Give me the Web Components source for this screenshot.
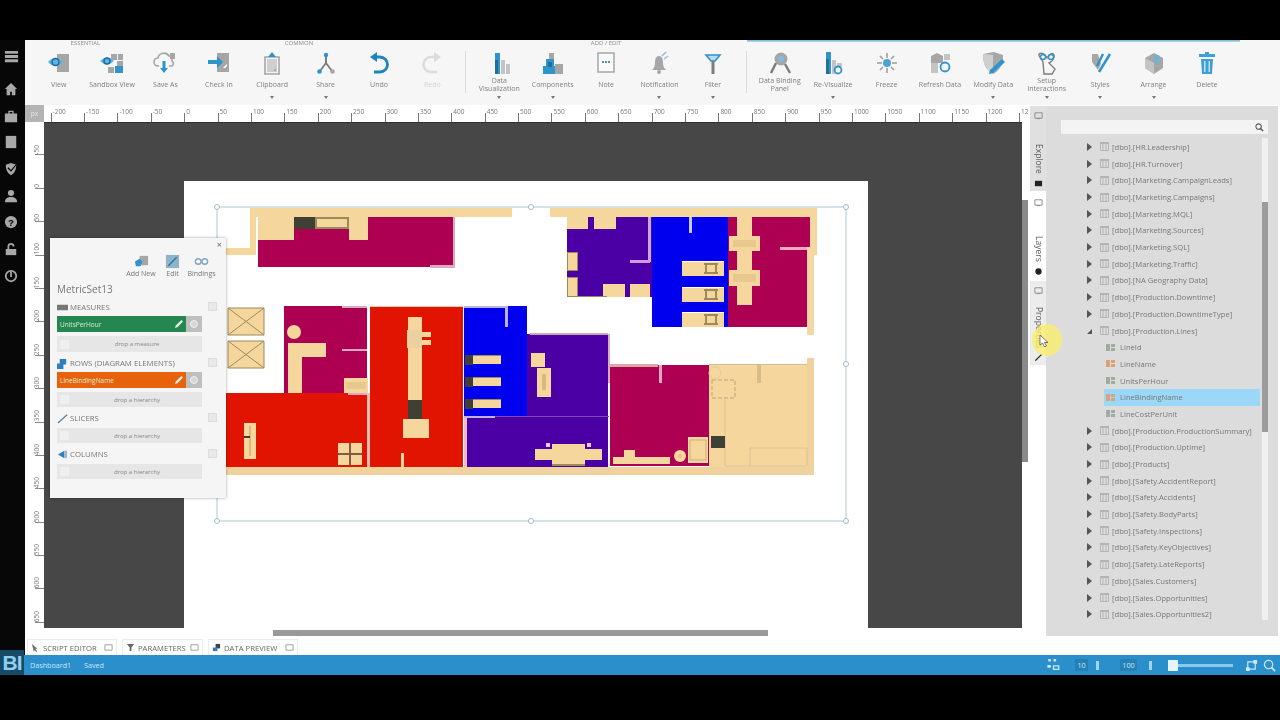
<!DOCTYPE html>
<html>

<head>
    <meta charset="utf-8">
    <title>Dashboard designer</title>
    <style>
        html, body { margin: 0; height: 720px; background: #000; overflow: hidden; }
        body { font-family: "Open Sans", "Liberation Sans", sans-serif; }
        bi-app { margin-top: 40px; }
    </style>
</head>

<body>
    <bi-app>
        <left-rail slot="rail"></left-rail>

        <tool-bar slot="toolbar">
            <tool-group title="ESSENTIAL">
                <tool-btn icon="view" label="View"></tool-btn>
                <tool-btn icon="sandbox" label="Sandbox View"></tool-btn>
            </tool-group>
            <tool-group title="COMMON">
                <tool-btn icon="saveas" label="Save As"></tool-btn>
                <tool-btn icon="checkin" label="Check In"></tool-btn>
                <tool-btn icon="clipboard" label="Clipboard" menu></tool-btn>
                <tool-btn icon="share" label="Share" menu></tool-btn>
                <tool-btn icon="undo" label="Undo"></tool-btn>
                <tool-btn icon="redo" label="Redo" off></tool-btn>
            </tool-group>
            <tool-sep></tool-sep>
            <tool-group title="ADD / EDIT">
                <tool-btn icon="dataviz" label="Data Visualization" menu></tool-btn>
                <tool-btn icon="components" label="Components" menu></tool-btn>
                <tool-btn icon="note" label="Note"></tool-btn>
                <tool-btn icon="notify" label="Notification" menu></tool-btn>
                <tool-btn icon="filter" label="Filter" menu></tool-btn>
            </tool-group>
            <tool-sep></tool-sep>
            <tool-group line>
                <tool-btn icon="binding" label="Data Binding Panel"></tool-btn>
                <tool-btn icon="revis" label="Re-Visualize" menu></tool-btn>
                <tool-btn icon="freeze" label="Freeze"></tool-btn>
                <tool-btn icon="refresh" label="Refresh Data"></tool-btn>
                <tool-btn icon="modify" label="Modify Data" menu></tool-btn>
                <tool-btn icon="interact" label="Setup Interactions" menu></tool-btn>
                <tool-btn icon="styles" label="Styles" menu></tool-btn>
                <tool-btn icon="arrange" label="Arrange" menu></tool-btn>
                <tool-btn icon="trash" label="Delete"></tool-btn>
            </tool-group>
        </tool-bar>

        <design-area slot="design">
            <floor-plan slot="page"></floor-plan>
            <metric-panel slot="over"></metric-panel>
        </design-area>

        <side-panel slot="side">
            <tree-row kind="table" label="[dbo].[HR.Leadership]"></tree-row>
            <tree-row kind="table" label="[dbo].[HR.Turnover]"></tree-row>
            <tree-row kind="table" label="[dbo].[Marketing.CampaignLeads]"></tree-row>
            <tree-row kind="table" label="[dbo].[Marketing.Campaigns]"></tree-row>
            <tree-row kind="table" label="[dbo].[Marketing.MQL]"></tree-row>
            <tree-row kind="table" label="[dbo].[Marketing.Sources]"></tree-row>
            <tree-row kind="table" label="[dbo].[Marketing.SQL]"></tree-row>
            <tree-row kind="table" label="[dbo].[Marketing.Traffic]"></tree-row>
            <tree-row kind="table" label="[dbo].[NA Geography Data]"></tree-row>
            <tree-row kind="table" label="[dbo].[Production.Downtime]"></tree-row>
            <tree-row kind="table" label="[dbo].[Production.DowntimeType]"></tree-row>
            <tree-row kind="table" open label="[dbo].[Production.Lines]"></tree-row>
            <tree-row kind="col" label="LineId"></tree-row>
            <tree-row kind="col" orange label="LineName"></tree-row>
            <tree-row kind="col" label="UnitsPerHour"></tree-row>
            <tree-row kind="col" orange selected label="LineBindingName"></tree-row>
            <tree-row kind="col" label="LineCostPerUnit"></tree-row>
            <tree-row kind="table" label="[dbo].[Production.ProductionSummary]"></tree-row>
            <tree-row kind="table" label="[dbo].[Production.Uptime]"></tree-row>
            <tree-row kind="table" label="[dbo].[Products]"></tree-row>
            <tree-row kind="table" label="[dbo].[Safety.AccidentReport]"></tree-row>
            <tree-row kind="table" label="[dbo].[Safety.Accidents]"></tree-row>
            <tree-row kind="table" label="[dbo].[Safety.BodyParts]"></tree-row>
            <tree-row kind="table" label="[dbo].[Safety.Inspections]"></tree-row>
            <tree-row kind="table" label="[dbo].[Safety.KeyObjectives]"></tree-row>
            <tree-row kind="table" label="[dbo].[Safety.LateReports]"></tree-row>
            <tree-row kind="table" label="[dbo].[Sales.Customers]"></tree-row>
            <tree-row kind="table" label="[dbo].[Sales.Opportunities]"></tree-row>
            <tree-row kind="table" label="[dbo].[Sales.Opportunities2]"></tree-row>
        </side-panel>

        <bottom-tabs slot="tabs"></bottom-tabs>
        <status-bar slot="status"></status-bar>
    </bi-app>

    <script type="text/javascript">
        const B = '#2f93cc', G = '#a6a6a6', D = '#7d7d7d';

        // --- toolbar icons, 24x24 ---
        const ICONS = {
            view: `<path fill="${G}" d="M10 3h12v18H10z"/><path fill="#5db4e4" d="M1 11Q8 3 16 11Q8 19 1 11z"/><circle cx="8.500" cy="11" r="3.500" fill="none" stroke="#1c6f9f" stroke-width="1.500"/>`,
            sandbox: `<path fill="${G}" d="M11 3h6v6h-6zM18 3h5v6h-5zM17 10h6v5h-6z"/><path fill="#5db4e4" d="M0 10Q7 3 14 10Q7 17 0 10z"/><circle cx="7" cy="10" r="3" fill="none" stroke="#1c6f9f" stroke-width="1.500"/><path fill="${B}" d="M15 15h8v7h-8z"/><path fill="${G}" d="M8 16h6v6H8z"/>`,
            saveas: `<path fill="none" stroke="${G}" stroke-width="1.600" d="M6 15H5a4 4 0 0 1 0-8 6 6 0 0 1 11-2h3v5a3 3 0 0 1 0 5h-3"/><path fill="${G}" d="M17 2h5v6h-5z"/><path fill="${B}" d="M9.500 10h3v7h2.500l-4 5-4-5h2.500z"/>`,
            checkin: `<path fill="${G}" d="M10 2h12v19H10z"/><path fill="#fff" d="M16 17l4-4v2l-2 2z"/><path fill="${B}" d="M1 9h9V5l6 6-6 6v-4H1z"/>`,
            clipboard: `<path fill="none" stroke="${G}" stroke-width="1.600" d="M5 6h14v17H5z"/><path fill="${B}" d="M8 6l4-5 4 5z"/><path fill="#cfcfcf" d="M7 8h10v13H7z"/><path fill="${G}" d="M13 20l3-3v3z"/>`,
            share: `<circle cx="12" cy="4" r="2.200" fill="${B}"/><path fill="${D}" d="M11 6h2v7h-2z"/><path fill="none" stroke="${D}" stroke-width="1.800" d="M12 12L6 20M12 12l6 8"/><circle cx="5.500" cy="20.500" r="2.300" fill="${B}"/><circle cx="18.500" cy="20.500" r="2.300" fill="${G}"/>`,
            undo: `<path fill="none" stroke="#1f83bd" stroke-width="2.800" d="M9 6h4a7 7 0 0 1 0 15H7"/><path fill="#1f83bd" d="M10 1v10L3 6z"/>`,
            redo: `<path fill="none" stroke="#dcdcdc" stroke-width="2.500" d="M16 6h-5a7 7 0 0 0 0 15h6"/><path fill="#dcdcdc" d="M14 1v10l7-5z"/>`,
            dataviz: `<path fill="#c4c4c4" d="M14 9h4v14h-4zM19 13h4v10h-4z"/><path fill="${B}" d="M8 2h5v21H8z"/><path fill="#1f6f9d" d="M8 9h3v14H8z"/>`,
            components: `<path fill="${G}" d="M8 2h5v6H8zM14 13h8v10h-8z"/><path fill="${B}" d="M5 8h8v9H5zM2 15h12v8H2z"/><path fill="#1f6f9d" d="M7 11h4v5H7z"/>`,
            note: `<path fill="#fafafa" stroke="${G}" stroke-width="1.500" d="M4 2h16v19H4z"/><path stroke="#5f8fac" stroke-width="2" stroke-dasharray="2 1" d="M8 11h8"/>`,
            notify: `<path fill="${G}" d="M12 5c-3 0-4 3-4 7 0 3-1 5-3 7h14c-2-2-3-4-3-7 0-4-1-7-4-7z"/><circle cx="12" cy="21" r="2" fill="${G}"/><path fill="none" stroke="#8fc1de" stroke-width="1.500" d="M15 5l4-4M17 8l4-3"/>`,
            filter: `<path fill="#bcd9ea" stroke="${B}" stroke-width="1.600" d="M5 4h14l-5 6h-4z"/><path fill="${D}" d="M10.500 10h3v13h-3z"/>`,
            binding: `<circle cx="13" cy="8" r="6.500" fill="${G}"/><circle cx="13" cy="8" r="3" fill="#7fbbdf"/><path fill="none" stroke="${D}" stroke-width="2.500" d="M8 12l-5 10M17 13l5 9"/>`,
            revis: `<path fill="${B}" d="M5 1h5v22H5z"/><path fill="#1f6f9d" d="M5 8h3v15H5z"/><path fill="#c4c4c4" d="M11 9h4v14h-4zM16 12h5v4h-5z"/><circle cx="17" cy="19" r="3.500" fill="none" stroke="${B}" stroke-width="1.800"/>`,
            freeze: `<circle cx="12" cy="12" r="4" fill="#4aa3d6"/><g stroke="#9a9a9a" stroke-width="1.500"><path d="M12 2v5M12 17v5M2 12h5M17 12h5M5 5l3 3M16 16l3 3M19 5l-3 3M8 16l-3 3"/></g>`,
            refresh: `<path fill="${G}" d="M3 5l6-3 6 3v7H3z"/><path fill="#c4c4c4" d="M3 12h7v10H3zM16 3h6v6h-6z"/><circle cx="17" cy="16" r="4.500" fill="none" stroke="${B}" stroke-width="1.800"/>`,
            modify: `<path fill="${G}" d="M2 3l11-2 9 3c0 10-3 15-10 19C5 19 2 13 2 3z"/><path fill="#cfcfcf" d="M2 3l10 1v19C5 19 2 13 2 3z"/><path fill="${B}" d="M21 8l3 3-12 11-4 1 1-4z"/>`,
            interact: `<path fill="none" stroke="${D}" stroke-width="1.400" d="M8 11c-2-4-5-6-4-8 2-2 6 0 8 4 2-4 6-6 7-3 1 4-3 7-5 8l6 6-3 5H9z"/><circle cx="8" cy="6" r="2.500" fill="none" stroke="${B}" stroke-width="1.400"/><circle cx="16" cy="6" r="2.500" fill="none" stroke="${B}" stroke-width="1.400"/>`,
            styles: `<path fill="${G}" d="M4 3h6l3 10-3 6-6-8z"/><path fill="none" stroke="${B}" stroke-width="2.500" d="M22 3L11 21M15 3l-6 12"/>`,
            arrange: `<path fill="${G}" d="M12 2l9 5v10l-9 6-9-6V7z"/><path fill="#c4c4c4" d="M3 7l9 5v11l-9-6z"/><path fill="#6fb1d8" d="M13 3l5 2-2 7-4 1z"/>`,
            trash: `<path fill="#3fa0d6" d="M10 1h4v2h6v3H4V3h6z"/><path fill="#3fa0d6" d="M6 8h12l-1 15H7z"/><path fill="#bfe0f2" d="M9 10h1.500v11H9zM13.500 10H15v11h-1.500z"/>`
        };

        // --- left rail icons, 16x16 ---
        const RAIL = [
            `<path d="M1 2h14v3H1zM1 6.500h14v3H1zM1 11h14v3H1z"/>`,
            `<path d="M8 1l7 7h-2v7H9v-4H7v4H3V8H1z"/>`,
            `<path d="M5 2h6v3h4v10H1V5h4zM6.500 3.500V5h3V3.500z"/>`,
            `<path d="M2 1h12v14H2z"/>`,
            `<path d="M2 3l6-2 6 2c0 6-2 10-6 12C4 13 2 9 2 3z"/><path fill="#000" d="M4 7l1-1 3 3 5-6 1 1-6 7z"/>`,
            `<circle cx="8" cy="4.500" r="3.500"/><path d="M1 15c0-4 3-6 7-6s7 2 7 6z"/>`,
            `<circle cx="8" cy="8" r="7"/><text x="8" y="12" font-size="11" font-weight="700" text-anchor="middle" fill="#000" font-family="Liberation Sans">?</text>`,
            `<path d="M2 8h12v7H2z"/><path fill="none" stroke="currentColor" stroke-width="2" d="M5 8V5a3 3 0 0 1 6 0"/>`,
            `<circle cx="8" cy="8" r="6" fill="none" stroke="currentColor" stroke-width="2"/><path d="M7 3h2v6H7z"/>`
        ];

        class BiApp extends HTMLElement {
            constructor() {
                super();
                this.attachShadow({ mode: 'open' }).innerHTML = `
                <style>
                    :host { display: grid; width: 1280px; height: 635px; grid-template-columns: 25px 1fr;
                        grid-template-rows: 65px 531px 19px 20px; background: #fff; filter: blur(.5px); }
                    ::slotted([slot=rail]) { grid-row: 1 / 4; }
                    ::slotted([slot=toolbar]) { grid-column: 2; }
                    .mid { grid-column: 2; display: flex; min-height: 0; }
                    ::slotted([slot=tabs]) { grid-column: 2; }
                    ::slotted([slot=status]) { grid-column: 1 / 3; }
                </style>
                <slot name="rail"></slot>
                <slot name="toolbar"></slot>
                <div class="mid"><slot name="design"></slot><slot name="side"></slot></div>
                <slot name="tabs"></slot>
                <slot name="status"></slot>`;
            }
        }

        class LeftRail extends HTMLElement {
            constructor() {
                super();
                const items = RAIL.map((p, i) => `<svg class="${i ? '' : 'first'}" viewBox="0 0 16 16">${p}</svg>`).join('');
                this.attachShadow({ mode: 'open' }).innerHTML = `
                <style>
                    :host { display: flex; flex-direction: column; align-items: center; background: #070707;
                        padding: 9px 3px 0 0; color: #a8a8a8; box-sizing: border-box; }
                    svg { width: 14px; height: 14px; fill: currentColor; margin-bottom: 12.700px; }
                    svg.first { width: 15px; height: 15px; margin-bottom: 18px; }
                </style>${items}`;
            }
        }

        class ToolBar extends HTMLElement {
            constructor() {
                super();
                this.attachShadow({ mode: 'open' }).innerHTML = `
                <style>
                    :host { display: flex; background: #f6f6f6; padding-left: 7px; }
                </style><slot></slot>`;
            }
        }

        class ToolGroup extends HTMLElement {
            constructor() {
                super();
                const title = this.getAttribute('title') || '';
                this.removeAttribute('title');
                this.attachShadow({ mode: 'open' }).innerHTML = `
                <style>
                    :host { display: flex; flex-direction: column; align-items: stretch; }
                    .head { height: 10px; font-size: 6px; line-height: 7px; color: #8d8d8d; text-align: center; }
                    .line { margin: 0 -6px; height: 1px; background: #a9d6e6; border-top: 1px solid #7fc0d8; }
                    .btns { display: flex; }
                </style>
                <div class="head">${this.hasAttribute('line') ? '<div class="line"></div>' : title}</div>
                <div class="btns"><slot></slot></div>`;
            }
        }

        class ToolSep extends HTMLElement {
            constructor() {
                super();
                this.attachShadow({ mode: 'open' }).innerHTML = `
                <style>
                    :host { display: block; width: 13.500px; position: relative; }
                    div { width: 1px; margin: 11px auto 0; height: 42px; background: #dcdcdc; }
                </style><div></div>`;
            }
        }

        class ToolBtn extends HTMLElement {
            constructor() {
                super();
                const label = this.getAttribute('label');
                const menu = this.hasAttribute('menu');
                this.attachShadow({ mode: 'open' }).innerHTML = `
                <style>
                    :host { display: flex; flex-direction: column; align-items: center; width: 53.400px; padding-top: 1px; }
                    svg { width: 24px; height: 24px; display: block; }
                    .lab { height: 16px; margin-top: 2px; display: flex; align-items: center; text-align: center;
                        font-size: 7px; line-height: 8px; color: ${this.hasAttribute('off') ? '#d4d4d4' : '#7f7f7f'}; width: 50px; justify-content: center; }
                    .arrow { margin-top: 3px; width: 0; height: 0; border: 2.500px solid transparent; border-top: 3px solid #777; border-bottom: 0; }
                </style>
                <svg viewBox="0 0 24 24">${ICONS[this.getAttribute('icon')]}</svg>
                <div class="lab">${label}</div>
                ${menu ? '<div class="arrow"></div>' : ''}`;
            }
        }

        class HRuler extends HTMLElement {
            constructor() {
                super();
                let html = '';
                for (let v = -200; v <= 1200; v += 50) html += `<div class="t"><span>${v}</span></div>`;
                // the reference shows the last value running into the side panel
                html += `<div class="t"><span>12</span></div>`;
                this.attachShadow({ mode: 'open' }).innerHTML = `
                <style>
                    :host { display: flex; overflow: hidden; background: #fff; padding-left: 6.600px; box-sizing: border-box; }
                    .t { flex: 0 0 33.400px; box-sizing: border-box; height: 17px; position: relative; }
                    .t:last-child { flex-basis: 12px; }
                    .t::before { content: ""; display: block; width: 1px; height: 9px; background: #777; margin-top: 8px; }
                    span { position: absolute; left: 2px; top: 3px; font-size: 6.500px; line-height: 8px; color: #777; }
                </style>${html}`;
            }
        }

        class VRuler extends HTMLElement {
            constructor() {
                super();
                let html = '';
                for (let v = -50; v <= 650; v += 50) html += `<div class="t"><span>${v}</span></div>`;
                this.attachShadow({ mode: 'open' }).innerHTML = `
                <style>
                    :host { display: block; overflow: hidden; background: #fff; }
                    .t { height: 33.400px; position: relative; box-sizing: border-box; }
                    .t:first-child { margin-top: -7.800px; }
                    .t::after { content: ""; position: absolute; right: 0; bottom: 0; width: 9px; height: 1px; background: #888; }
                    span { position: absolute; left: 8px; bottom: 1px; writing-mode: vertical-rl; transform: rotate(180deg);
                        font-size: 6.500px; line-height: 7px; color: #777; }
                </style>${html}`;
            }
        }

        class DesignArea extends HTMLElement {
            constructor() {
                super();
                this.attachShadow({ mode: 'open' }).innerHTML = `
                <style>
                    :host { display: grid; grid-template-columns: 19px 978px 8px; grid-template-rows: 17px 506px 8px; width: 1005px; background: #fff; }
                    .corner { background: #b4b4b4; color: #e8e8e8; font-size: 6.500px; text-align: center; line-height: 17px; }
                    h-ruler { grid-column: 2 / 4; }
                    v-ruler { grid-row: 2 / 4; }
                    .canvas { background: #474747; padding: 58px 0 0 140px; position: relative; border-top: 1px solid #333; box-sizing: border-box; }
                    ::slotted([slot=over]) { position: absolute; left: 6px; top: 115px; }
                    .vs { background: #fff; padding-top: 78px; }
                    .vs div { height: 262px; background: #8a8a8a; margin-left: 0; width: 6px; }
                    .hs { background: #fff; padding: 2px 0 0 229px; box-sizing: border-box; }
                    .hs div { width: 495px; height: 6px; background: #9a9a9a; }
                </style>
                <div class="corner">px</div>
                <h-ruler></h-ruler>
                <v-ruler></v-ruler>
                <div class="canvas"><slot name="page"></slot><slot name="over"></slot></div>
                <div class="vs"><div></div></div>
                <div class="hs"><div></div></div>`;
            }
        }

        // plan of the site, in the coordinates of the window so it can be read against the picture
        class FloorPlan extends HTMLElement {
            constructor() {
                super();
                const tan = '#f5d79e', mag = '#ae0052', red = '#e01400', blu = '#0000ee', pur = '#4b00a5', pnk = '#dcaac0', olv = '#9c8a5c', drk = '#3f3f34';
                const r = (x, y, w, h, f) => `<rect x="${x}" y="${y}" width="${w}" height="${h}" fill="${f}"/>`;
                const crate = (x, y) => r(x, y, 36, 27, tan) + `<path fill="none" stroke="${olv}" d="M${x} ${y}h36v27h-36zL${x + 36} ${y + 27}M${x + 36} ${y}L${x} ${y + 27}"/>`;
                const bench = y => r(682, y, 42, 15, tan) + r(682, y, 42, 1, '#fff') + `<path fill="none" stroke="${olv}" stroke-width="2" d="M704 ${y + 3}h14M704 ${y + 12}h14M706 ${y + 3}v9M716 ${y + 3}v9"/>`;
                const seat = y => r(465, y - 1, 8, 10, drk) + r(473, y, 28, 8, tan) + r(473, y - 1, 28, 1, olv);
                this.attachShadow({ mode: 'open' }).innerHTML = `
                <style>
                    :host { display: block; width: 684px; height: 447px; background: #fff; }
                    svg { display: block; }
                </style>
                <svg width="684" height="447" viewBox="184 181 684 447">
                    ${r(250, 208, 262, 9, tan)}${r(250, 208, 6, 47, tan)}${r(226, 248, 30, 7, tan)}
                    ${r(258, 217, 195, 50, mag)}${r(258, 217, 36, 23, tan)}${r(294, 217, 21, 12, drk)}${r(315, 217, 34, 12, olv)}${r(317, 219, 30, 8, tan)}
                    ${r(349, 217, 19, 23, tan)}${r(453, 217, 2, 51, pnk)}${r(430, 265, 25, 3, pnk)}

                    ${r(284, 306, 83, 87, mag)}${r(342, 306, 25, 2, pnk)}${r(342, 349, 25, 2, pnk)}
                    <circle cx="294" cy="332" r="7" fill="${tan}"/>
                    ${r(288, 343, 38, 14, tan)}${r(288, 343, 14, 50, tan)}${r(344, 378, 24, 15, tan)}${r(346, 382, 20, 7, '#e8c88e')}
                    ${crate(228, 308)}${crate(228, 341)}

                    ${r(226, 393, 141, 74, red)}${r(348, 393, 19, 2, pnk)}
                    ${r(244, 423, 12, 36, tan)}${r(249, 426, 2, 30, '#d9b97e')}${r(244, 436, 6, 2, drk)}
                    ${r(338, 443, 24, 22, tan)}${r(349, 443, 2, 22, '#8a5a40')}${r(338, 453, 24, 2, '#8a5a40')}
                    ${r(370, 306, 93, 161, red)}${r(370, 306, 93, 1, '#eec9b0')}
                    ${r(408, 317, 14, 83, tan)}${r(407, 330, 15, 18, '#ecd0a0')}${r(422, 332, 9, 5, tan)}${r(422, 340, 9, 5, tan)}
                    ${r(408, 400, 14, 20, drk)}${r(403, 419, 26, 19, tan)}${r(401, 453, 3, 14, tan)}
                    ${r(367, 393, 3, 74, '#f3c0b0')}

                    ${r(464, 306, 63, 110, blu)}${r(464, 306, 41, 2, '#b9b4e8')}${r(505, 306, 3, 21, '#b9b4e8')}
                    ${seat(356)}${seat(378)}${seat(400)}
                    ${r(527, 334, 81, 82, pur)}${r(464, 416, 144, 51, pur)}${r(465, 416, 144, 1, '#7d4ab8')}
                    ${r(464, 416, 3, 51, '#e8c0c8')}${r(464, 416, 31, 2, '#c5b0e0')}
                    ${r(530, 333, 78, 2, '#c9a8b8')}${r(608, 334, 2, 49, pnk)}
                    ${r(531, 353, 14, 14, tan)}${r(537, 368, 14, 29, tan)}${r(542, 374, 4, 16, '#d9b97e')}
                    ${r(552, 444, 33, 21, tan)}${r(535, 449, 17, 11, tan)}${r(585, 449, 17, 11, tan)}${r(552, 464, 33, 2, olv)}
                    ${r(546, 443, 4, 4, '#eacbd8')}${r(587, 443, 4, 4, '#eacbd8')}

                    ${r(610, 365, 99, 101, mag)}${r(610, 364, 48, 3, '#dba8a8')}${r(659, 365, 3, 18, pnk)}
                    ${r(613, 457, 57, 7, tan)}${r(624, 450, 11, 7, tan)}
                    <circle cx="680" cy="456" r="6" fill="${tan}"/><circle cx="680" cy="456" r="2" fill="#e6c482"/>
                    ${r(688, 437, 20, 26, tan)}<rect x="690" y="440" width="16" height="20" fill="none" stroke="#cdb07a"/>

                    ${r(709, 364, 105, 103, tan)}${r(807, 358, 7, 117, '#f0d39c')}${r(709, 364, 98, 1, '#d6bc8c')}
                    ${r(757, 365, 4, 18, '#d8bd8c')}
                    <circle cx="715" cy="373" r="6" fill="none" stroke="#e4cb9c"/>
                    <rect x="712" y="380" width="23" height="18" fill="none" stroke="#cfb686" stroke-width="1.500" stroke-dasharray="4 2"/>
                    <path fill="none" stroke="#dcc294" d="M725 398v68h81M750 466v-18h57v18"/>
                    ${r(711, 436, 14, 12, drk)}
                    ${r(226, 467, 588, 8, '#f0d39c')}

                    ${r(550, 208, 267, 9, tan)}${r(810, 217, 7, 38, tan)}${r(807, 217, 7, 118, '#f3d8a4')}
                    ${r(567, 217, 85, 80, pur)}${r(567, 217, 21, 12, tan)}${r(594, 217, 22, 12, tan)}
                    ${r(567, 252, 11, 19, olv)}${r(568, 253, 9, 17, tan)}${r(567, 277, 11, 20, olv)}${r(568, 278, 9, 18, tan)}
                    ${r(603, 284, 22, 13, tan)}${r(630, 284, 20, 13, tan)}${r(567, 296, 40, 1, olv)}
                    ${r(648, 217, 3, 45, '#c7a9dc')}${r(630, 260, 20, 3, '#d29ad8')}
                    ${r(652, 217, 76, 110, blu)}${r(689, 217, 3, 16, '#c8c8f4')}
                    ${bench(261)}${bench(287)}${bench(312)}
                    ${r(728, 217, 82, 30, mag)}${r(728, 247, 79, 80, mag)}
                    ${r(737, 217, 15, 88, tan)}${r(729, 236, 31, 15, tan)}${r(729, 270, 31, 16, tan)}
                    ${r(733, 240, 23, 7, '#e8c88e')}${r(733, 274, 23, 8, '#e8c88e')}${r(780, 247, 27, 3, '#f2a8c0')}

                    <g fill="none" stroke="#c9dbe0" stroke-width="1.500">
                        <rect x="217" y="207" width="629" height="314"/>
                    </g>
                    <g fill="#fff" stroke="#9fbcc6">
                        <circle cx="217" cy="207" r="2.500"/><circle cx="531" cy="207" r="2.500"/><circle cx="846" cy="207" r="2.500"/>
                        <circle cx="846" cy="364" r="2.500"/><circle cx="846" cy="521" r="2.500"/><circle cx="531" cy="521" r="2.500"/><circle cx="217" cy="521" r="2.500"/>
                    </g>
                </svg>`;
            }
        }

        class MetricPanel extends HTMLElement {
            constructor() {
                super();
                const act = (label, body) => `<div class="act"><svg viewBox="0 0 16 16">${body}</svg><span>${label}</span></div>`;
                const head = (label, icon) => `<div class="hd"><svg viewBox="0 0 12 12">${icon}</svg><span>${label}</span><i></i></div>`;
                const drop = (label, h) => `<div class="drop" style="height:${h}px"><b></b><span>${label}</span></div>`;
                const bar = (label, col) => `<div class="bar"><div class="fill" style="background:${col}"><span>${label}</span>
                    <svg viewBox="0 0 10 10"><path fill="#e8f2e8" d="M8 0l2 2-7 7-3 1 1-3z"/></svg></div><div class="knob"><u></u></div></div>`;
                this.attachShadow({ mode: 'open' }).innerHTML = `
                <style>
                    :host { display: block; width: 176px; height: 260px; box-sizing: border-box; background: #f5f5f5;
                        box-shadow: 0 0 3px rgba(0,0,0,.35); padding: 0 7px; position: relative; color: #777; }
                    .x { position: absolute; right: 4px; top: 2px; font-size: 9px; line-height: 10px; color: #666; }
                    .acts { display: flex; justify-content: flex-end; gap: 0; padding-top: 16px; height: 24px; margin-right: 3px; }
                    .act { display: flex; flex-direction: column; align-items: center; width: 29px; }
                    .act:first-child { width: 34px; }
                    .act svg { width: 15px; height: 15px; }
                    .act span { font-size: 7px; line-height: 9px; color: #777; white-space: nowrap; }
                    h2 { margin: 4px 0 0; font: 400 10px/14px "Open Sans", sans-serif; color: #777; }
                    .hd { display: flex; align-items: center; height: 12px; margin-top: 5px; font-size: 7.800px; white-space: nowrap; position: relative; }
                    .hd svg { width: 11px; height: 11px; margin-right: 2px; }
                    .hd i { position: absolute; left: 151px; top: 1px; width: 9px; height: 9px; background: #e8e8e8; border: 1px solid #ddd; box-sizing: border-box; }
                    .bar { display: flex; width: 145px; height: 16px; margin-top: 3px; }
                    .fill { flex: 1; display: flex; align-items: center; justify-content: space-between; padding: 0 3px; font-size: 6.500px; color: #d8ecd8; }
                    .fill svg { width: 8px; height: 8px; }
                    .knob { width: 16px; background: #bfbfbf; display: flex; align-items: center; justify-content: center; }
                    .knob u { width: 8px; height: 8px; border-radius: 50%; background: #d8d8d8; border: 1px solid #eee; box-sizing: border-box; }
                    .drop { display: flex; align-items: center; width: 145px; margin-top: 4px; background: #e6e6e6; font-size: 6px; color: #888; position: relative; }
                    .drop b { width: 9px; height: 9px; margin-left: 3px; background: #efefef; }
                    .drop span { flex: 1; text-align: center; padding-left: 3px; }
                </style>
                <div class="x">×</div>
                <div class="acts">
                    ${act('Add New', `<path fill="#a6a6a6" d="M6 2h9v10H6z"/><path fill="#2f93cc" d="M1 8l5-3 3 3-2 5H2z"/>`)}
                    ${act('Edit', `<path fill="#8fb4c8" d="M1 1h14v14H1z"/><path fill="#1f78ad" d="M3 12L12 3l1 1-9 9z"/>`)}
                    ${act('Bindings', `<circle cx="4.500" cy="8" r="3" fill="none" stroke="#7fa8c0" stroke-width="1.500"/><circle cx="11.500" cy="8" r="3" fill="none" stroke="#7fa8c0" stroke-width="1.500"/>`)}
                </div>
                <h2>MetricSet13</h2>
                ${head('MEASURES', `<path fill="#777" d="M0 3h12v6H0z"/>`)}
                ${bar('UnitsPerHour', '#25874f')}
                ${drop('drop a measure', 16)}
                ${head('ROWS (DIAGRAM ELEMENTS)', `<path fill="#2f7fc0" d="M3 1h7v6H3zM0 6h7v6H0z"/>`)}
                ${bar('LineBindingName', '#e8620c')}
                ${drop('drop a hierarchy', 15)}
                ${head('SLICERS', `<path fill="none" stroke="#5a86a0" stroke-width="1.500" d="M1 11L11 2"/>`)}
                ${drop('drop a hierarchy', 15)}
                ${head('COLUMNS', `<path fill="#2f7fc0" d="M1 6l7-4v8z"/><path fill="#9fb8c8" d="M8 2h3v8H8z"/>`)}
                ${drop('drop a hierarchy', 15)}`;
            }
        }

        class SidePanel extends HTMLElement {
            constructor() {
                super();
                const restore = `<svg class="r" viewBox="0 0 10 10"><path fill="none" stroke="#888" d="M1 2h8v6H1z"/><path fill="#888" d="M3 8h4v1H3z"/></svg>`;
                this.attachShadow({ mode: 'open' }).innerHTML = `
                <style>
                    :host { display: flex; width: 250px; height: 530px; margin-top: 1px; background: #fff; position: relative; }
                    .tabs { width: 16px; display: flex; flex-direction: column; gap: 2px; }
                    .tab { height: 85px; display: flex; flex-direction: column; align-items: center; box-sizing: border-box; padding: 5px 0 3px; background: #e0e0e0; font-size: 8.500px; line-height: 11px; color: #5f5f5f; }
                    .tab.on { background: #fff; height: 86px; }
                    .tab.p { background: #ececec; height: 84px; }
                    .tab span { writing-mode: vertical-rl; flex: 1; text-align: right; padding-bottom: 5px; padding-left: 2px; }
                    .tab svg.r { width: 9px; height: 9px; flex: none; }
                    .tab svg.m { width: 9px; height: 9px; flex: none; }
                    .main { width: 232px; background: #dcdcdc; box-sizing: border-box; padding: 14px 10px 0 0; position: relative; }
                    .search { margin-left: 15px; height: 14px; background: #f3f3f3; display: flex; align-items: center; justify-content: flex-end; padding-right: 4px; margin-bottom: 4.600px; }
                    .search svg { width: 9px; height: 9px; }
                    .sb { position: absolute; left: 216px; top: 32px; width: 6px; height: 482px; background: #f0f0f0; }
                    .sb div { height: 230px; margin-top: 64px; background: #9c9c9c; }
                    .spot { position: absolute; left: 2px; top: 218px; width: 30px; height: 32px; border-radius: 50%; background: rgba(250,240,105,.78); }
                    .cur { position: absolute; left: 9px; top: 229px; width: 10px; height: 12px; }
                </style>
                <div class="tabs">
                    <div class="tab">${restore}<span>Explore</span><svg class="m" viewBox="0 0 10 10"><path fill="#222" d="M1 2h8v6H1z"/></svg></div>
                    <div class="tab on">${restore}<span>Layers</span><svg class="m" viewBox="0 0 10 10"><circle cx="5" cy="5" r="3.500" fill="#222"/></svg></div>
                    <div class="tab p">${restore}<span>Properties</span><svg class="m" viewBox="0 0 10 10"><path fill="#222" d="M8 1l1 1-7 7-1-1z"/></svg></div>
                </div>
                <div class="main">
                    <div class="search"><svg viewBox="0 0 10 10"><circle cx="4" cy="4" r="3" fill="none" stroke="#555" stroke-width="1.200"/><path stroke="#555" stroke-width="1.600" d="M6 6l3 3"/></svg></div>
                    <slot></slot>
                    <div class="sb"><div></div></div>
                </div>
                <div class="spot"></div>
                <svg class="cur" viewBox="0 0 10 12"><path fill="#fff" stroke="#555" stroke-width=".8" d="M1 0v10l2.500-2 2 4 2-1-2-3.500H9z"/></svg>`;
            }
        }

        class TreeRow extends HTMLElement {
            constructor() {
                super();
                const table = this.getAttribute('kind') == 'table';
                const open = this.hasAttribute('open');
                const col = this.hasAttribute('orange') ? '#dca276' : '#a2aba2';
                const icon = table
                    ? `<svg class="i" viewBox="0 0 9 9"><path fill="#b4b4b4" d="M0 0h9v2H0z"/><path fill="none" stroke="#b4b4b4" d="M.5 2v6.500h8V2M3 2v6M6 2v6"/></svg>`
                    : `<svg class="i" viewBox="0 0 9 9"><path fill="${col}" d="M0 1h4v7H0zM5 1h4v3H5zM5 5h4v3H5z"/></svg>`;
                const arrow = table ? `<svg class="a" viewBox="0 0 5 8"><path fill="#555" d="${open ? 'M5 2v5H0z' : 'M0 0l5 4-5 4z'}"/></svg>` : '';
                this.attachShadow({ mode: 'open' }).innerHTML = `
                <style>
                    :host { display: flex; align-items: center; height: 16.690px; box-sizing: border-box; font-size: 7.600px; color: #777; white-space: nowrap;
                        padding-left: ${table ? '41px' : '2px'}; margin-left: ${table ? '0' : '58px'}; width: ${table ? 'auto' : '156px'};
                        background: ${this.hasAttribute('selected') ? '#9bd7f7' : 'none'}; }
                    .a { width: 5px; height: 8px; margin-right: 8px; }
                    .i { width: 9px; height: 9px; margin-right: ${table ? '3px' : '5px'}; flex: none; }
                </style>${arrow}${icon}<span>${this.getAttribute('label')}</span>`;
            }
        }

        class BottomTabs extends HTMLElement {
            constructor() {
                super();
                const min = `<svg class="m" viewBox="0 0 10 10"><path fill="none" stroke="#9a9a9a" d="M1 2h8v6H1z"/></svg>`;
                const tab = (label, w, ic) => `<div class="tab" style="width:${w}px"><svg class="i" viewBox="0 0 10 10">${ic}</svg><span>${label}</span>${min}</div>`;
                this.attachShadow({ mode: 'open' }).innerHTML = `
                <style>
                    :host { display: flex; gap: 5px; padding: 3px 0 0 2px; background: #fff; box-sizing: border-box; align-items: stretch; }
                    .tab { display: flex; align-items: center; box-sizing: border-box; border: 1px solid #ececec; border-bottom: 0; padding: 0 3px; font-size: 7.700px; color: #666; white-space: nowrap; }
                    .tab span { flex: 1; margin-left: 3px; }
                    .i { width: 9px; height: 9px; flex: none; }
                    .m { width: 9px; height: 9px; flex: none; }
                </style>
                ${tab('SCRIPT EDITOR', 90, `<path fill="#777" d="M1 1l6 5-2 1 2 2-1 1-2-2-1 2z"/>`)}
                ${tab('PARAMETERS', 81, `<path fill="#666" d="M1 1h8L6 5v4H4V5z"/>`)}
                ${tab('DATA PREVIEW', 90, `<path fill="#444" d="M4 1h5v5H4z"/><path fill="#2f7fc0" d="M1 5h5v4H1z"/>`)}`;
            }
        }

        class StatusBar extends HTMLElement {
            constructor() {
                super();
                this.attachShadow({ mode: 'open' }).innerHTML = `
                <style>
                    :host { display: flex; align-items: center; background: #2a8fcb; position: relative; font-size: 7.200px; color: #cbe8f7; }
                    .logo { position: absolute; left: 0; bottom: 0; width: 24px; height: 25px; background: #174a66; color: #8fd0ee;
                        font: 700 21px/25px "Liberation Sans", sans-serif; text-align: center; letter-spacing: -1px; }
                    .l { margin-left: 30px; width: 54px; }
                    .r { margin-left: auto; display: flex; align-items: center; padding-right: 4px; }
                    .box { height: 12px; background: #2580b6; display: flex; align-items: center; justify-content: center; }
                    .sp { width: 3px; height: 9px; background: #9fd4ee; margin: 0 21px 0 8px; }
                    .sp.b { margin: 0 16px 0 12px; }
                    .handle { width: 10px; height: 11px; background: #e6f4fb; }
                    .track { width: 55px; height: 3px; background: #8cc9ea; margin-right: 12px; }
                    svg { width: 13px; height: 13px; flex: none; }
                </style>
                <div class="logo">BI</div>
                <span class="l">Dashboard1</span><span>Saved</span>
                <div class="r">
                    <svg viewBox="0 0 16 16" style="width:17px;height:14px;margin-right:13px"><path fill="#cbe8f7" d="M2 1h3v3H2zM8 1h3v3H8zM1 8h4v3H1z"/><path fill="none" stroke="#cbe8f7" stroke-width="1.500" d="M8 9h6v4H8z"/></svg>
                    <div class="box" style="width:13px">10</div><div class="sp"></div>
                    <div class="box" style="width:17px">100</div><div class="sp b"></div>
                    <div class="handle"></div><div class="track"></div>
                    <svg viewBox="0 0 14 14" style="margin-right:5px"><path fill="none" stroke="#cbe8f7" stroke-width="1.300" d="M3 3h8v8H3z"/><path fill="#cbe8f7" d="M9 1h4v4H9zM1 9h4v4H1z"/></svg>
                    <svg viewBox="0 0 14 14"><circle cx="6" cy="6" r="4.500" fill="none" stroke="#cbe8f7" stroke-width="1.300"/><path stroke="#cbe8f7" stroke-width="1.800" d="M9 9l4 4"/></svg>
                </div>`;
            }
        }

        customElements.define('bi-app', BiApp);
        customElements.define('left-rail', LeftRail);
        customElements.define('tool-bar', ToolBar);
        customElements.define('tool-group', ToolGroup);
        customElements.define('tool-sep', ToolSep);
        customElements.define('tool-btn', ToolBtn);
        customElements.define('h-ruler', HRuler);
        customElements.define('v-ruler', VRuler);
        customElements.define('design-area', DesignArea);
        customElements.define('floor-plan', FloorPlan);
        customElements.define('metric-panel', MetricPanel);
        customElements.define('side-panel', SidePanel);
        customElements.define('tree-row', TreeRow);
        customElements.define('bottom-tabs', BottomTabs);
        customElements.define('status-bar', StatusBar);
    </script>
</body>

</html>
